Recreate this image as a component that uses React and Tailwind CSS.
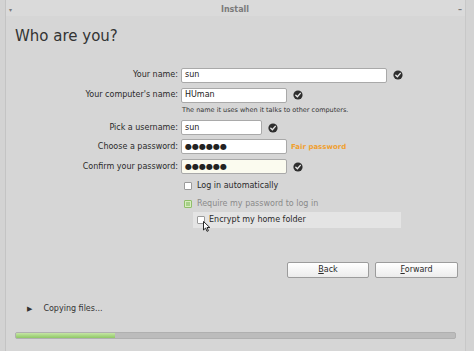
const Check = () => (
  <svg width="10" height="10" viewBox="0 0 10 10" className="shrink-0">
    <circle cx="5" cy="5" r="4.6" fill="#2e2e2e" />
    <path d="M2.8 5.2 L4.4 6.7 L7.3 3.4" stroke="#e8e8e8" strokeWidth="1.4" fill="none" strokeLinecap="round" />
  </svg>
);

const Field = ({ width, value, dots, tint }) => (
  <div
    className={`h-[15px] border border-[#a9a9a9] rounded-[2px] flex items-center px-[3px] text-[8px] text-[#222] ${tint ? "bg-[#fbfbef]" : "bg-white"} ${width}`}
  >
    {dots ? <span className="tracking-[0px] text-[8px] leading-none">●●●●●●</span> : value}
  </div>
);

const Row = ({ label, children }) => (
  <div className="flex items-center h-[15px]">
    <div className="w-[175px] pr-[3px] text-right text-[8px] text-[#2a2a2a]">{label}</div>
    <div className="flex items-center gap-[6px]">{children}</div>
  </div>
);

export default function App() {
  return (
    <div className="w-[474px] h-[351px] bg-[#d3d3d3] overflow-hidden font-['DejaVu_Sans',sans-serif] relative">
      <div className="ml-[5px] mr-[8px] h-full bg-[#d6d6d6] border-l border-[#c4c4c4] border-r border-r-[#c8c8c8] flex flex-col">
        {/* title bar */}
        <div className="h-[16px] pt-[3px] flex items-center justify-between px-[3px] bg-[#dadada] text-[#7a7a7a]">
          <span className="text-[6px] leading-none">▾</span>
          <span className="text-[8px] font-bold">Install</span>
          <span className="text-[8px] leading-none font-bold">–</span>
        </div>

        <div className="pl-[9px] pt-[9px] text-[15px] text-[#333]">Who are you?</div>

        {/* form */}
        <div className="mt-[20px] flex flex-col">
          <Row label="Your name:">
            <Field width="w-[206px]" value="sun" />
            <Check />
          </Row>
          <div className="mt-[5px]">
            <Row label="Your computer's name:">
              <Field width="w-[106px]" value="HUman" />
              <Check />
            </Row>
          </div>
          <div className="pl-[176px] text-[6.5px] text-[#333] mt-[3px]">The name it uses when it talks to other computers.</div>
          <div className="mt-[5px]">
            <Row label="Pick a username:">
              <Field width="w-[81px]" value="sun" />
              <Check />
            </Row>
          </div>
          <div className="mt-[4px]">
            <Row label="Choose a password:">
              <Field width="w-[106px]" dots />
              <span className="text-[7px] font-bold text-[#f0a030] -ml-[2px]">Fair password</span>
            </Row>
          </div>
          <div className="mt-[5px]">
            <Row label="Confirm your password:">
              <Field width="w-[106px]" dots tint />
              <Check />
            </Row>
          </div>

          {/* checkboxes */}
          <div className="pl-[178px] mt-[6px] flex items-center gap-[5px] h-[12px] text-[8px] text-[#2a2a2a]">
            <span className="w-[8px] h-[8px] bg-white border border-[#9a9a9a] rounded-[1px]" />
            Log in automatically
          </div>
          <div className="pl-[178px] mt-[6px] flex items-center gap-[5px] h-[12px] text-[8px] text-[#8a8a8a]">
            <span className="w-[8px] h-[8px] bg-[#d8ecc0] border border-[#8fbf6a] rounded-[1px] flex items-center justify-center">
              <span className="w-[4px] h-[4px] bg-[#a8d08a]" />
            </span>
            Require my password to log in
          </div>
          <div className="ml-[187px] mt-[2px] w-[208px] h-[16px] bg-[#e4e4e4] flex items-center gap-[4px] pl-[4px] text-[8px] text-[#2a2a2a] relative">
            <span className="w-[8px] h-[8px] bg-white border border-[#9a9a9a] rounded-[1px]" />
            Encrypt my home folder
            <svg width="8" height="11" viewBox="0 0 8 11" className="absolute left-[10px] top-[9px]">
              <path d="M0.5 0.5 L0.5 9 L2.6 7 L4 10.3 L5.4 9.7 L4 6.5 L6.8 6.5 Z" fill="#fff" stroke="#111" strokeWidth="0.9" />
            </svg>
          </div>
        </div>

        {/* buttons */}
        <div className="mt-[34px] flex justify-end gap-[6px] pr-[7px]">
          <button className="w-[82px] h-[16px] rounded-[2px] border border-[#9c9c9c] bg-gradient-to-b from-white to-[#ececec] text-[8px] text-[#2a2a2a]">
            <span className="underline">B</span>ack
          </button>
          <button className="w-[83px] h-[16px] rounded-[2px] border border-[#9c9c9c] bg-gradient-to-b from-white to-[#ececec] text-[8px] text-[#2a2a2a]">
            <span className="underline">F</span>orward
          </button>
        </div>

        {/* status */}
        <div className="mt-[25px] pl-[21px] flex items-center gap-[11px] text-[8px] text-[#333]">
          <span className="text-[7px] leading-none">▶</span>
          Copying files...
        </div>

        <div className="mt-[17px] mx-[9px] h-[7px] rounded-[2px] bg-[#bcbcbc] border border-[#b0b0b0] overflow-hidden">
          <div className="h-full w-[99px] bg-gradient-to-b from-[#c6e6a4] to-[#8fc866]" />
        </div>
      </div>
    </div>
  );
}
